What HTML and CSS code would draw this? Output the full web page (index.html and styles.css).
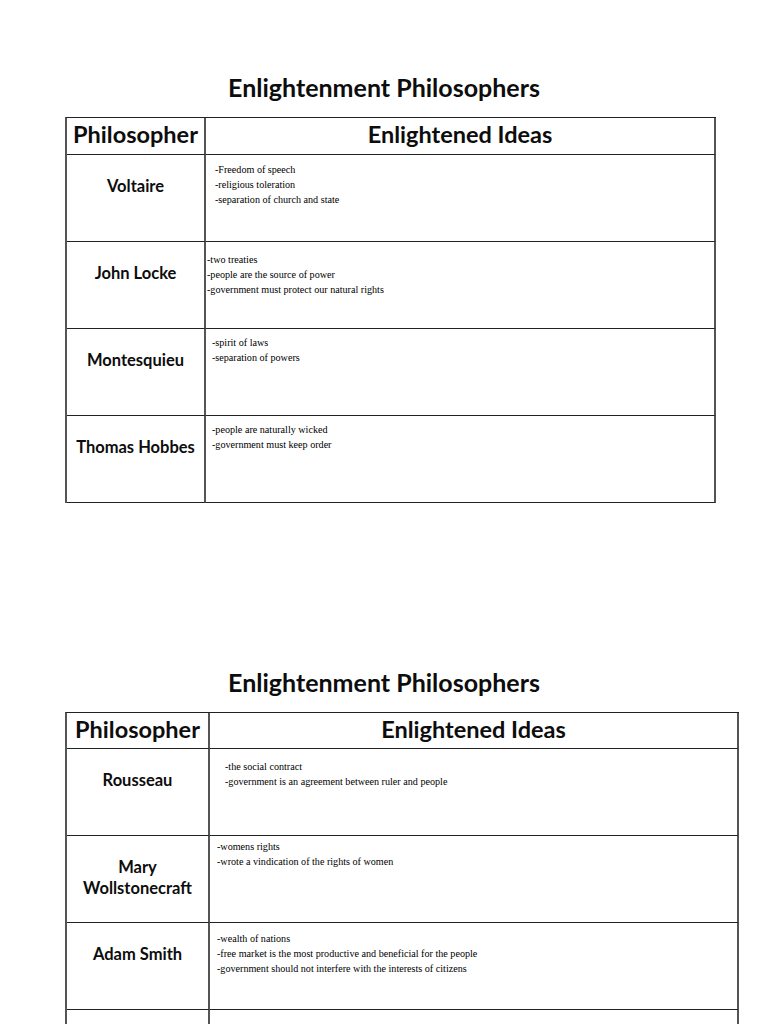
FILE: index.html
```html
<!DOCTYPE html>
<html lang="en">
<head>
<meta charset="utf-8">
<title>Enlightenment Philosophers</title>
<link rel="stylesheet" href="styles.css">
</head>
<body>
<main class="page">
  <section class="sheet sheet-one">
    <h1 class="title">Enlightenment Philosophers</h1>
    <div class="table table-one">
      <div class="cell head">Philosopher</div>
      <div class="cell head">Enlightened Ideas</div>

      <div class="cell name">Voltaire</div>
      <div class="cell ideas pad-14 in-10">
        <p>-Freedom of speech</p>
        <p>-religious toleration</p>
        <p>-separation of church and state</p>
      </div>

      <div class="cell name">John Locke</div>
      <div class="cell ideas pad-17 in-2">
        <p>-two treaties</p>
        <p>-people are the source of power</p>
        <p>-government must protect our natural rights</p>
      </div>

      <div class="cell name">Montesquieu</div>
      <div class="cell ideas pad-13 in-7">
        <p>-spirit of laws</p>
        <p>-separation of powers</p>
      </div>

      <div class="cell name">Thomas Hobbes</div>
      <div class="cell ideas pad-13 in-7">
        <p>-people are naturally wicked</p>
        <p>-government must keep order</p>
      </div>
    </div>
  </section>

  <section class="sheet sheet-two">
    <h1 class="title">Enlightenment Philosophers</h1>
    <div class="table table-two">
      <div class="cell head">Philosopher</div>
      <div class="cell head">Enlightened Ideas</div>

      <div class="cell name">Rousseau</div>
      <div class="cell ideas pad-17 in-16">
        <p>-the social contract</p>
        <p>-government is an agreement between ruler and people</p>
      </div>

      <div class="cell name">Mary<br>Wollstonecraft</div>
      <div class="cell ideas pad-10 in-8">
        <p>-womens rights</p>
        <p>-wrote a vindication of the rights of women</p>
      </div>

      <div class="cell name">Adam Smith</div>
      <div class="cell ideas pad-15 in-8">
        <p>-wealth of nations</p>
        <p>-free market is the most productive and beneficial for the people</p>
        <p>-government should not interfere with the interests of citizens</p>
      </div>

      <div class="cell name"></div>
      <div class="cell ideas"></div>
    </div>
  </section>
</main>
</body>
</html>
```

FILE: styles.css
```css
* {
  box-sizing: border-box;
}

html, body {
  margin: 0;
  padding: 0;
  background: #ffffff;
}

body {
  width: 768px;
  height: 1024px;
  overflow: hidden;
  color: #0d0d0d;
  font-family: Lato, "Open Sans", "Liberation Sans", sans-serif;
}

.page {
  padding-top: 72px;
}

.sheet-two {
  margin-top: 164px;
}

.title {
  margin: 0 0 15px 0;
  height: 30px;
  line-height: 30px;
  font-size: 25px;
  font-weight: 700;
  text-align: center;
}

.table {
  display: grid;
  margin-left: 65px;
  border-top: 1px solid #222222;
  border-left: 2px solid #555555;
  grid-auto-rows: 87px;
}

.table-one {
  width: 651px;
  grid-template-columns: 139px 1fr;
  grid-template-rows: 37px;
}

.table-two {
  width: 674px;
  grid-template-columns: 143px 1fr;
  grid-template-rows: 36px;
}

.cell {
  border-right: 2px solid #555555;
  border-bottom: 1px solid #222222;
}

.head {
  display: flex;
  align-items: center;
  justify-content: center;
  font-size: 23.5px;
  font-weight: 700;
  padding-bottom: 4px;
}

.name {
  padding-top: 21px;
  text-align: center;
  font-size: 16.5px;
  font-weight: 700;
  line-height: 21px;
}

.ideas {
  font-family: "Liberation Serif", "DejaVu Serif", serif;
  font-size: 10.15px;
  line-height: 15.3px;
  color: #000000;
}

.ideas p {
  margin: 0;
  white-space: nowrap;
}

.pad-10 { padding-top: 2.5px; }
.pad-13 { padding-top: 5.5px; }
.pad-14 { padding-top: 6.5px; }
.pad-15 { padding-top: 7.5px; }
.pad-17 { padding-top: 9.5px; }

.in-2 { padding-left: 1px; }
.in-7 { padding-left: 6px; }
.in-8 { padding-left: 7px; }
.in-10 { padding-left: 9px; }
.in-16 { padding-left: 15px; }
```
